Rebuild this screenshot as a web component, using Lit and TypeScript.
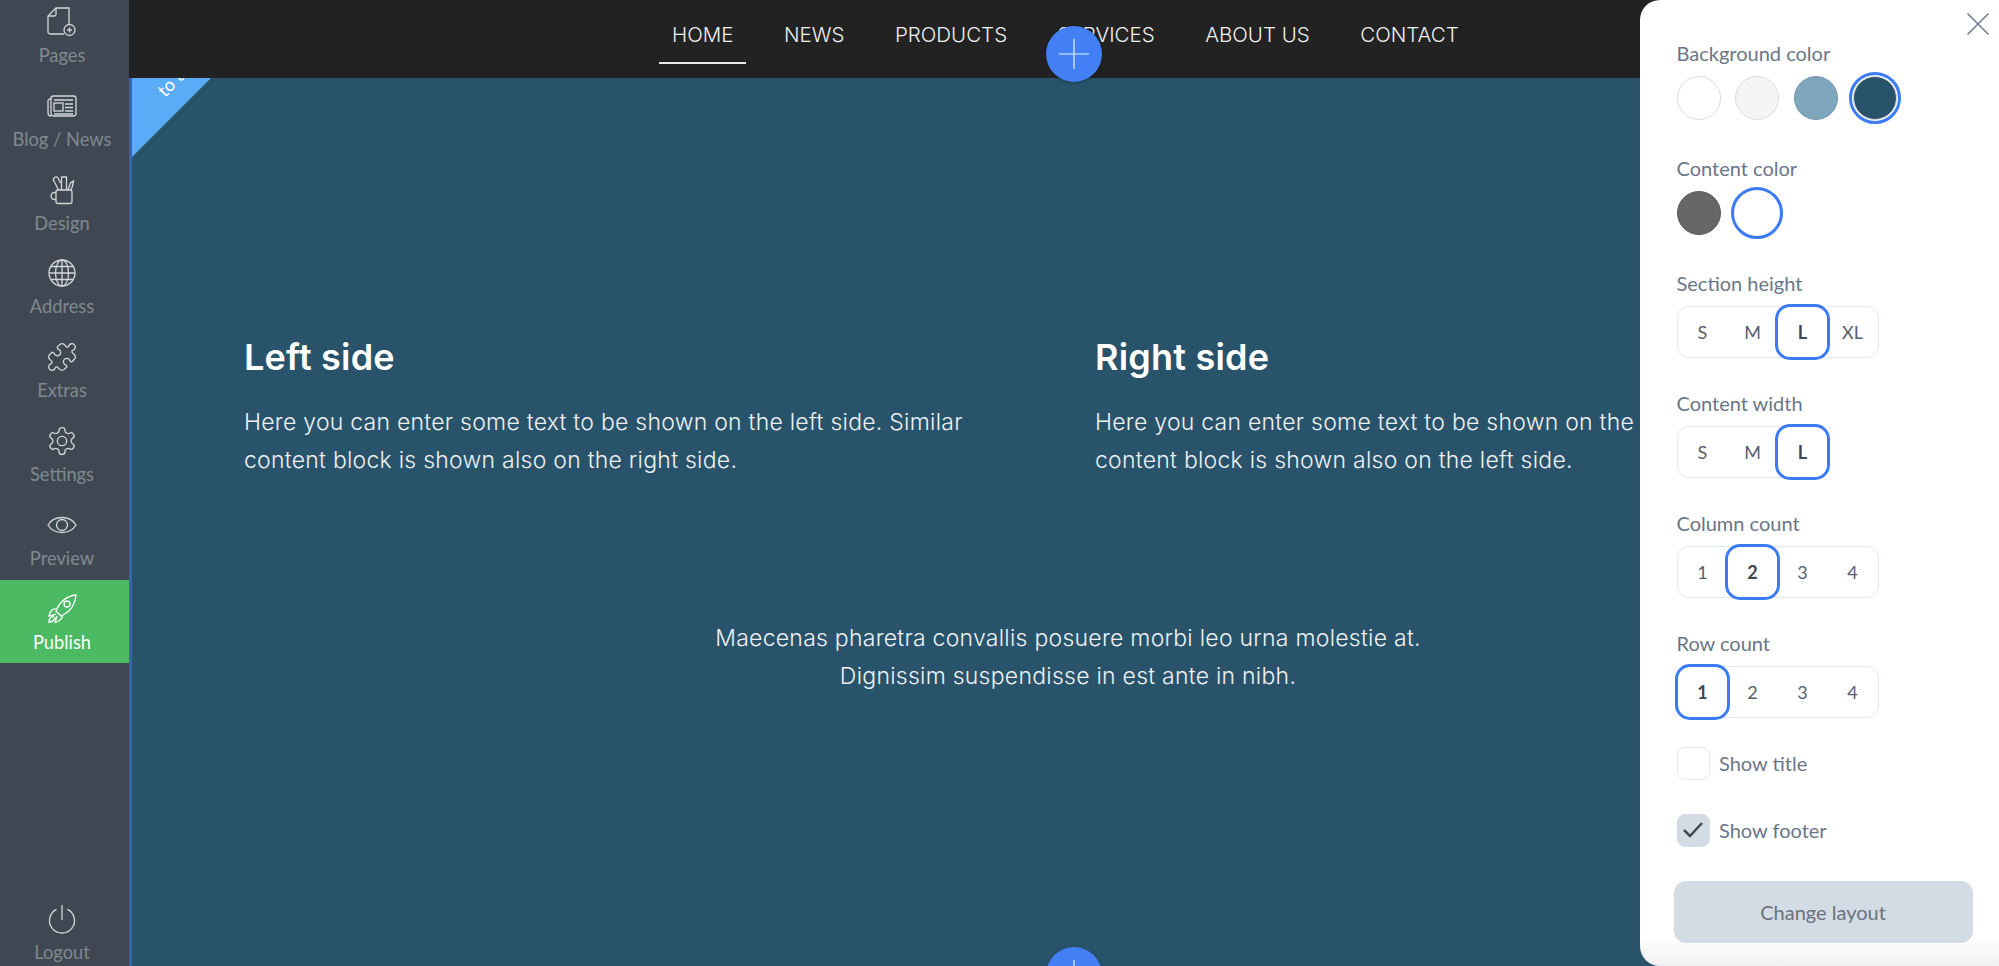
import { LitElement, html, css, svg } from "lit";
import { customElement } from "lit/decorators.js";

const icons: Record<string, unknown> = {
  pages: svg`<svg viewBox="0 0 32 32"><path d="M18 28H4a2 2 0 0 1-2-2V10l8-8h13v16"/><path d="M10 2v6.500A1.500 1.500 0 0 1 8.500 10H2"/><circle cx="23.500" cy="24" r="5.500"/><path d="M23.500 21.500v5M21 24h5"/></svg>`,
  blog: svg`<svg viewBox="0 0 32 32"><rect x="5" y="6" width="25" height="20" rx="2.500"/><path d="M5 9H4a2 2 0 0 0-2 2v12a3 3 0 0 0 3 3M8 10h19M19 14h8M19 17.500h8M19 21h8M8 24h19"/><rect x="8" y="13" width="9" height="8"/></svg>`,
  design: svg`<svg viewBox="0 0 32 32"><rect x="10" y="16" width="16" height="13.500" rx="2"/><path d="M10 18.500H8.500a3.500 3.500 0 0 0 0 7H10M12.500 16 8 7a2.500 2.500 0 0 1 4-3l2.500 5M15.500 16V3h5v13M22 16l2.500-7 3-2-1 5-1.500 4"/></svg>`,
  address: svg`<svg viewBox="0 0 32 32"><circle cx="16" cy="16" r="13"/><ellipse cx="16" cy="16" rx="6.500" ry="13"/><path d="M16 3v26M3 16h26M5 9.500h22M5 22.500h22"/></svg>`,
  extras: svg`<svg viewBox="0 0 24 24"><path d="M19.439 7.850c-.049.322.059.648.289.878l1.568 1.568c.47.47.706 1.087.706 1.704s-.235 1.233-.706 1.704l-1.611 1.611a.98.98 0 0 1-.837.276c-.47-.07-.802-.48-.968-.925a2.501 2.501 0 1 0-3.214 3.214c.446.166.855.497.925.968a.979.979 0 0 1-.276.837l-1.610 1.610a2.404 2.404 0 0 1-1.705.707 2.402 2.402 0 0 1-1.704-.706l-1.568-1.568a1.026 1.026 0 0 0-.877-.29c-.493.074-.84.504-1.020.968a2.500 2.500 0 1 1-3.237-3.237c.464-.18.894-.527.967-1.020a1.026 1.026 0 0 0-.289-.877l-1.568-1.568A2.402 2.402 0 0 1 1.998 12c0-.617.236-1.234.706-1.704L4.230 8.770c.24-.24.581-.353.917-.303.515.077.877.528 1.073 1.010a2.500 2.500 0 1 0 3.259-3.259c-.482-.196-.933-.558-1.010-1.073-.05-.336.062-.676.303-.917l1.525-1.525A2.402 2.402 0 0 1 12 1.998c.617 0 1.234.236 1.704.706l1.568 1.568c.23.23.556.338.877.29.493-.074.84-.504 1.020-.968a2.500 2.500 0 1 1 3.237 3.237c-.464.18-.894.527-.967 1.020Z" stroke-width="1"/></svg>`,
  settings: svg`<svg viewBox="0 0 24 24"><path d="M12.220 2h-.44a2 2 0 0 0-2 2v.18a2 2 0 0 1-1 1.730l-.43.25a2 2 0 0 1-2 0l-.15-.08a2 2 0 0 0-2.730.73l-.22.38a2 2 0 0 0 .73 2.730l.15.1a2 2 0 0 1 1 1.720v.51a2 2 0 0 1-1 1.740l-.15.09a2 2 0 0 0-.73 2.730l.22.38a2 2 0 0 0 2.730.73l.15-.08a2 2 0 0 1 2 0l.43.25a2 2 0 0 1 1 1.730V20a2 2 0 0 0 2 2h.44a2 2 0 0 0 2-2v-.18a2 2 0 0 1 1-1.730l.43-.25a2 2 0 0 1 2 0l.15.08a2 2 0 0 0 2.730-.73l.22-.39a2 2 0 0 0-.73-2.730l-.15-.08a2 2 0 0 1-1-1.740v-.5a2 2 0 0 1 1-1.740l.15-.09a2 2 0 0 0 .73-2.730l-.22-.38a2 2 0 0 0-2.730-.73l-.15.08a2 2 0 0 1-2 0l-.43-.25a2 2 0 0 1-1-1.730V4a2 2 0 0 0-2-2z" stroke-width="1"/><circle cx="12" cy="12" r="3.500" stroke-width="1"/></svg>`,
  preview: svg`<svg viewBox="0 0 32 32"><path d="M2 16C8 6 24 6 30 16 24 26 8 26 2 16Z"/><circle cx="16" cy="16" r="5.500"/></svg>`,
  publish: svg`<svg viewBox="0 0 32 32"><path d="M30 2C21 3 14 8 10 18l5 5C24 19 29 12 30 2Z"/><circle cx="21" cy="11" r="3"/><path d="M10 16C7 15 4 18 3 23l7-2M16 22.500c1 2.500-2 5.500-7 7l2-6.500M8 23c-3 0-5 3-5 6 3 0 6-2 6-5"/></svg>`,
  logout: svg`<svg viewBox="0 0 32 32"><path d="M10.500 6.300a12.500 12.500 0 1 0 11 0M16 2v15"/></svg>`,
};

const nav = [
  { id: "pages", label: "Pages" },
  { id: "blog", label: "Blog / News" },
  { id: "design", label: "Design" },
  { id: "address", label: "Address" },
  { id: "extras", label: "Extras" },
  { id: "settings", label: "Settings" },
  { id: "preview", label: "Preview" },
  { id: "publish", label: "Publish" },
];
const menu = ["HOME", "NEWS", "PRODUCTS", "SERVICES", "ABOUT US", "CONTACT"];
const segs = [
  { label: "Section height", opts: ["S", "M", "L", "XL"], sel: "L" },
  { label: "Content width", opts: ["S", "M", "L"], sel: "L" },
  { label: "Column count", opts: ["1", "2", "3", "4"], sel: "2" },
  { label: "Row count", opts: ["1", "2", "3", "4"], sel: "1" },
];

@customElement("app-root")
export class AppRoot extends LitElement {
  static styles = css`
    :host { display: flex; width: 1999px; height: 966px; overflow: hidden; position: relative; font-family: Lato, "Liberation Sans", sans-serif; }
    .side { width: 129px; flex: none; background: #3f4852; display: flex; flex-direction: column; margin-top: -7px; margin-bottom: -8px; color: #7f8890; }
    .item { height: 83.800px; flex: none; display: flex; flex-direction: column; align-items: center; padding: 13px 5px 0 0; box-sizing: border-box; }
    .item svg { width: 32px; height: 32px; fill: none; stroke: #d3d6d9; stroke-width: 1.300; display: block; }
    .item span { font-size: 18.300px; line-height: 24px; margin-top: 5px; white-space: nowrap; }
    .item.pub { background: #4cba63; color: #fff; }
    .item.pub svg { stroke: #fff; }
    .item.logout { margin-top: auto; }
    .main { flex: 1; min-width: 0; display: flex; flex-direction: column; }
    header { height: 78px; flex: none; background: #222; display: flex; align-items: flex-start; padding-left: 530px; gap: 24.500px; color: #f0f0f0; font-family: Inter, sans-serif; font-weight: 300; font-size: 20.500px; }
    header a { padding: 0 13px; height: 64px; line-height: 70px; white-space: nowrap; box-sizing: border-box; }
    header a.on { border-bottom: 2px solid #e8e8e8; }
    .section { flex: 1; background: #29536b; border-left: 3px solid #3a62b8; padding: 257px 107px 0 112px; color: #fff; position: relative; overflow: hidden; font-family: Inter, sans-serif; }
    .cols { display: grid; grid-template-columns: 851px 1fr; }
    h2 { margin: 0 0 24px; font-size: 36px; line-height: 44px; font-weight: 600; letter-spacing: .2px; }
    p { margin: 0; font-size: 23px; line-height: 38px; font-weight: 300; white-space: nowrap; color: #edf1f3; letter-spacing: .25px; }
    .center { margin-top: 140px; text-align: center; }
    .ribbon { position: absolute; left: -3px; top: 0; width: 82px; height: 82px; background: #5aacf7; clip-path: polygon(0 0, 100% 0, 0 100%); }
    .ribbon span { position: absolute; left: 38px; top: 2px; font-size: 18px; line-height: 20px; font-family: Lato, sans-serif; transform: rotate(-45deg); transform-origin: left bottom; white-space: nowrap; }
    .fab { position: absolute; width: 56px; height: 56px; left: 1046px; border-radius: 50%; background: #4480f5; box-shadow: 0 1px 3px rgba(0,0,0,.3); display: flex; align-items: center; justify-content: center; }
    .fab svg { width: 32px; height: 32px; stroke: #e8effc; stroke-width: 1.300; fill: none; }
    .fab.top { top: 26px; }
    .fab.bottom { top: 947px; }
    .panel { position: absolute; left: 1640px; top: 0; width: 359px; height: 966px; box-sizing: border-box; background: linear-gradient(#fff 97%, #f0f0f0); border-radius: 20px 0 0 20px; padding: 41px 26px 0 36.500px; color: #6a7688; font-size: 20px; }
    .close { position: absolute; left: 327px; top: 13px; width: 22px; height: 22px; stroke: #64748b; stroke-width: 1.400; fill: none; }
    .label { line-height: 24px; margin-bottom: 10.500px; }
    .colors { display: flex; gap: 14.700px; margin-bottom: 36.500px; }
    .dot { width: 44px; height: 44px; border-radius: 50%; box-sizing: border-box; border: 1.500px solid #dcdcdc; position: relative; flex: none; }
    .dot.sel::after { content: ""; position: absolute; inset: -5px; border: 3px solid #3b7bf6; border-radius: 50%; }
    .seg { display: inline-flex; vertical-align: top; height: 52px; box-sizing: border-box; border: 1.500px solid #e2e8f0; border-radius: 12px; color: #555f6c; font-size: 18px; }
    .seg span { width: 50px; display: flex; align-items: center; justify-content: center; position: relative; }
    .seg span.sel { font-weight: 700; color: #3f4852; }
    .seg span.sel::after { content: ""; position: absolute; inset: -3px -2.500px; border: 3px solid #3b7bf6; border-radius: 15px; }
    .group { margin-bottom: 33.500px; }
    .group.first { margin-top: 0.500px; }
    .group .segwrap { height: 52px; }
    .check { display: flex; align-items: center; gap: 9.500px; height: 33px; margin-bottom: 34px; }
    .group.last { margin-bottom: 29px; }
    .box { width: 33px; height: 33px; box-sizing: border-box; border: 1.500px solid #e2e8f0; border-radius: 8px; display: flex; align-items: center; justify-content: center; }
    .box.on { background: #d3dbe4; border-color: #d3dbe4; }
    .box svg { width: 24px; height: 24px; fill: none; stroke: #3f4852; stroke-width: 2.500; }
    .btn { margin-left: -3px; width: 299px; height: 62px; border-radius: 12px; background: #d3dbe4; display: flex; align-items: center; justify-content: center; color: #6a7280; }
  `;

  private plus = svg`<svg viewBox="0 0 34 34"><path d="M17 1v32M1 17h32"/></svg>`;

  render() {
    return html`
      <nav class="side">
        ${nav.map(
          (n) => html`<div class="item ${n.id === "publish" ? "pub" : ""}">${icons[n.id]}<span>${n.label}</span></div>`
        )}
        <div class="item logout">${icons.logout}<span>Logout</span></div>
      </nav>
      <div class="main">
        <header>${menu.map((m, i) => html`<a class=${i === 0 ? "on" : ""}>${m}</a>`)}</header>
        <section class="section">
          <div class="ribbon"><span>to top</span></div>
          <div class="cols">
            <div>
              <h2>Left side</h2>
              <p>Here you can enter some text to be shown on the left side. Similar<br />content block is shown also on the right side.</p>
            </div>
            <div>
              <h2>Right side</h2>
              <p>Here you can enter some text to be shown on the right side. Similar<br />content block is shown also on the left side.</p>
            </div>
          </div>
          <div class="center">
            <p>Maecenas pharetra convallis posuere morbi leo urna molestie at.<br />Dignissim suspendisse in est ante in nibh.</p>
          </div>
        </section>
      </div>
      <div class="fab top">${this.plus}</div>
      <div class="fab bottom">${this.plus}</div>
      <aside class="panel">
        <svg class="close" viewBox="0 0 22 22"><path d="M0.500 0.500l21 21M21.500 0.500l-21 21"/></svg>
        <div class="label">Background color</div>
        <div class="colors">
          <div class="dot" style="background:#fff"></div>
          <div class="dot" style="background:#f3f5f7"></div>
          <div class="dot" style="background:#7ea6bc;border-color:#7198ae"></div>
          <div class="dot sel" style="background:#29536b"></div>
        </div>
        <div class="label">Content color</div>
        <div class="colors">
          <div class="dot" style="background:#666;border-color:#5c5c5c"></div>
          <div class="dot sel" style="background:#fff;border-color:transparent"></div>
        </div>
        ${segs.map(
          (s, i) => html`<div class="group ${i === 0 ? "first" : ""} ${i === 3 ? "last" : ""}">
            <div class="label">${s.label}</div>
            <div class="segwrap"><div class="seg">${s.opts.map((o) => html`<span class=${o === s.sel ? "sel" : ""}>${o}</span>`)}</div></div>
          </div>`
        )}
        <div class="check"><div class="box"></div>Show title</div>
        <div class="check"><div class="box on"><svg viewBox="0 0 24 24"><path d="M3 12l6 6L21 5"/></svg></div>Show footer</div>
        <div class="btn">Change layout</div>
      </aside>
    `;
  }
}
